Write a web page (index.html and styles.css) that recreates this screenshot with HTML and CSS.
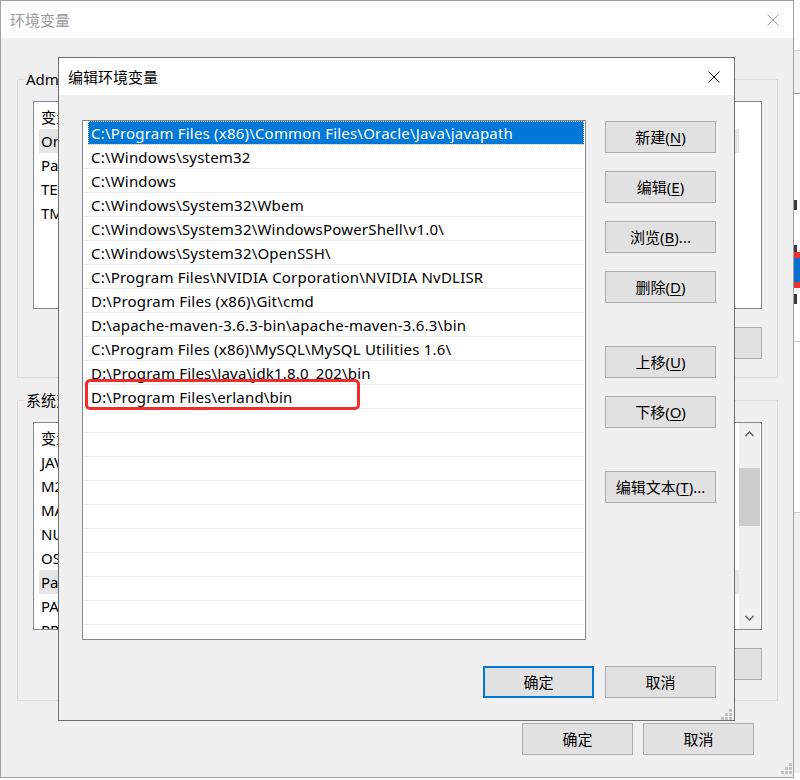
FILE: index.html
```html
<!DOCTYPE html>
<html lang="zh">
<head>
    <meta charset="UTF-8">
    <meta name="viewport" content="width=device-width, initial-scale=1.0">
    <title>编辑环境变量</title>
    <link rel="stylesheet" href="styles.css">
</head>
<body>
    <div class="window outer"> <!-- 后面的“环境变量”窗口 -->
        <div class="titlebar">
            <span class="title">环境变量</span>
            <svg class="close" width="12" height="12" viewBox="0 0 12 12"><path d="M0.5 0.5L11.5 11.5M11.5 0.5L0.5 11.5"/></svg>
        </div>
        <div class="content">
            <fieldset class="group">
                <legend>Administrator 的用户变量(U)</legend>
                <div class="listview">
                    <div class="lv-body">
                        <div class="lv-row"><span class="name">变量</span><span>值</span></div>
                        <div class="lv-row hl"><span class="name">OneDrive</span><span>C:\Users\Administrator\OneDrive</span></div>
                        <div class="lv-row"><span class="name">Path</span><span>C:\Users\Administrator\AppData\Local\Microsoft\WindowsApps;</span></div>
                        <div class="lv-row"><span class="name">TEMP</span><span>C:\Users\Administrator\AppData\Local\Temp</span></div>
                        <div class="lv-row"><span class="name">TMP</span><span>C:\Users\Administrator\AppData\Local\Temp</span></div>
                    </div>
                </div>
                <div class="btn-row">
                    <button class="btn">新建(<u>N</u>)...</button>
                    <button class="btn">编辑(<u>E</u>)...</button>
                    <button class="btn">删除(<u>D</u>)</button>
                </div>
            </fieldset>
            <fieldset class="group sys">
                <legend>系统变量(S)</legend>
                <div class="listview scroll">
                    <div class="lv-body">
                        <div class="lv-row"><span class="name">变量</span><span>值</span></div>
                        <div class="lv-row"><span class="name">JAVA_HOME</span><span>D:\Program Files\Java\jdk1.8.0_202</span></div>
                        <div class="lv-row"><span class="name">M2_HOME</span><span>D:\apache-maven-3.6.3-bin\apache-maven-3.6.3</span></div>
                        <div class="lv-row"><span class="name">MAVEN_HOME</span><span>D:\apache-maven-3.6.3-bin\apache-maven-3.6.3</span></div>
                        <div class="lv-row"><span class="name">NUMBER_OF_PROCESSORS</span><span>8</span></div>
                        <div class="lv-row"><span class="name">OS</span><span>Windows_NT</span></div>
                        <div class="lv-row hl"><span class="name">Path</span><span>C:\Program Files (x86)\Common Files\Oracle\Java\javapath;</span></div>
                        <div class="lv-row"><span class="name">PATHEXT</span><span>.COM;.EXE;.BAT;.CMD;.VBS;.VBE;.JS;.JSE;.WSF;.WSH;.MSC</span></div>
                        <div class="lv-row"><span class="name">PROCESSOR_ARCHITECTURE</span><span>AMD64</span></div>
                    </div>
                    <div class="scrollbar">
                        <div class="sb-btn"><svg width="9" height="6" viewBox="0 0 9 6"><path d="M0.5 5L4.5 1L8.5 5"/></svg></div>
                        <div class="sb-track"><div class="sb-thumb"></div></div>
                        <div class="sb-btn"><svg width="9" height="6" viewBox="0 0 9 6"><path d="M0.5 1L4.5 5L8.5 1"/></svg></div>
                    </div>
                </div>
                <div class="btn-row">
                    <button class="btn">新建(<u>W</u>)...</button>
                    <button class="btn">编辑(<u>I</u>)...</button>
                    <button class="btn">删除(<u>L</u>)</button>
                </div>
            </fieldset>
            <div class="foot">
                <button class="btn">确定</button>
                <button class="btn">取消</button>
            </div>
        </div>
        <svg class="grip" width="11" height="11" viewBox="0 0 11 11"><rect x="8" y="0" width="3" height="3"/><rect x="4" y="4" width="3" height="3"/><rect x="8" y="4" width="3" height="3"/><rect x="0" y="8" width="3" height="3"/><rect x="4" y="8" width="3" height="3"/><rect x="8" y="8" width="3" height="3"/></svg>
    </div>

    <div class="behind"> <!-- 再后面露出的一条页面 -->
        <div class="bh-white" style="height: 50px"></div>
        <div class="bh-line"></div>
        <div class="bh-gray" style="height: 42px"></div>
        <div class="bh-line dark"></div>
        <div class="bh-white" style="height: 106px"></div>
        <div class="bh-ink" style="height: 10px"></div>
        <div class="bh-white" style="height: 35px"></div>
        <div class="bh-ink" style="height: 7px"></div>
        <div class="bh-red" style="height: 6px"></div>
        <div class="bh-blue" style="height: 24px"></div>
        <div class="bh-red" style="height: 6px"></div>
        <div class="bh-white" style="height: 6px"></div>
        <div class="bh-ink" style="height: 10px"></div>
        <div class="bh-white" style="height: 37px"></div>
        <div class="bh-line"></div>
        <div class="bh-white" style="height: 170px"></div>
        <div class="bh-line"></div>
        <div class="bh-gray" style="height: 260px"></div>
    </div>

    <div class="window dialog"> <!-- 前面的“编辑环境变量”对话框 -->
        <div class="titlebar">
            <span class="title">编辑环境变量</span>
            <svg class="close" width="12" height="12" viewBox="0 0 12 12"><path d="M0.5 0.5L11.5 11.5M11.5 0.5L0.5 11.5"/></svg>
        </div>
        <div class="dlg-body">
            <div class="pathlist">
                <div class="path-row sel">C:\Program Files (x86)\Common Files\Oracle\Java\javapath</div>
                <div class="path-row">C:\Windows\system32</div>
                <div class="path-row">C:\Windows</div>
                <div class="path-row">C:\Windows\System32\Wbem</div>
                <div class="path-row">C:\Windows\System32\WindowsPowerShell\v1.0\</div>
                <div class="path-row">C:\Windows\System32\OpenSSH\</div>
                <div class="path-row">C:\Program Files\NVIDIA Corporation\NVIDIA NvDLISR</div>
                <div class="path-row">D:\Program Files (x86)\Git\cmd</div>
                <div class="path-row">D:\apache-maven-3.6.3-bin\apache-maven-3.6.3\bin</div>
                <div class="path-row">C:\Program Files (x86)\MySQL\MySQL Utilities 1.6\</div>
                <div class="path-row">D:\Program Files\Java\jdk1.8.0_202\bin</div>
                <div class="path-row">D:\Program Files\erland\bin</div>
                <div class="path-row"></div>
                <div class="path-row"></div>
                <div class="path-row"></div>
                <div class="path-row"></div>
                <div class="path-row"></div>
                <div class="path-row"></div>
                <div class="path-row"></div>
                <div class="path-row"></div>
                <div class="path-row"></div>
                <div class="path-row"></div>
            </div>
            <div class="side">
                <button class="btn">新建(<u>N</u>)</button>
                <button class="btn">编辑(<u>E</u>)</button>
                <button class="btn">浏览(<u>B</u>)...</button>
                <button class="btn">删除(<u>D</u>)</button>
                <button class="btn far">上移(<u>U</u>)</button>
                <button class="btn">下移(<u>O</u>)</button>
                <button class="btn far">编辑文本(<u>T</u>)...</button>
            </div>
            <div class="dlg-foot">
                <button class="btn default">确定</button>
                <button class="btn">取消</button>
            </div>
        </div>
        <svg class="grip" width="11" height="11" viewBox="0 0 11 11"><rect x="8" y="0" width="3" height="3"/><rect x="4" y="4" width="3" height="3"/><rect x="8" y="4" width="3" height="3"/><rect x="0" y="8" width="3" height="3"/><rect x="4" y="8" width="3" height="3"/><rect x="8" y="8" width="3" height="3"/></svg>
    </div>

    <div class="mark"></div> <!-- 红框标注 -->
</body>
</html>
```

FILE: styles.css
```css
body {
    margin: 0;
    position: relative; /* 给对话框和红框定位 */
    display: flex;
    width: 800px;
    height: 780px;
    overflow: hidden;
    background: #fff;
    font-family: "Noto Sans", "Noto Sans CJK SC", sans-serif;
    font-size: 15px;
    color: #000;
}
.window {
    box-sizing: border-box;
    background: #f0f0f0;
    display: flex;
    flex-direction: column;
}
.titlebar {
    flex: none;
    height: 37px;
    background: #fff;
    display: flex;
    align-items: center;
    justify-content: space-between;
    padding: 0 14px 0 9px;
}
.close path {
    stroke: #000;
    stroke-width: 1;
    fill: none;
}
.grip {
    position: absolute; /* 右下角的拖动点 */
    fill: #c2c2c2;
}

/* 后面的窗口 */
.outer {
    flex: none;
    position: relative;
    width: 794px;
    height: 778px;
    border: 1px solid #a0a0a0;
}
.outer .titlebar {
    color: #9a9a9a; /* 非活动窗口标题 */
}
.outer .close path {
    stroke: #9a9a9a;
}
.outer .grip {
    right: 1px;
    bottom: 3px;
}
.content {
    flex: 1;
    padding: 31px 15px 0 16px;
}
.group {
    margin: 0;
    min-width: 0;
    border: 1px solid #dcdcdc;
    padding: 0 15px 18px;
}
.group + .group {
    margin-top: 12px;
}
.group.sys {
    padding-bottom: 20px;
}
.group legend {
    margin-left: -8px;
    padding: 0 1px;
    line-height: 20px;
}
.listview {
    box-sizing: border-box;
    height: 208px;
    margin-top: 12px;
    border: 1px solid #828790;
    background: #fff;
    display: flex;
}
.lv-body {
    flex: 1;
    min-width: 0;
    padding: 3px 22px 0 5px;
    overflow: hidden;
}
.listview.scroll .lv-body {
    padding-right: 0;
}
.lv-row {
    display: flex;
    height: 24px;
    line-height: 24px;
    padding-left: 2px;
    white-space: nowrap;
}
.lv-row.hl {
    background: #e5e5e5;
}
.lv-row .name {
    flex: none;
    width: 200px;
}
.scrollbar {
    flex: none;
    width: 21px;
    margin-right: 1px;
    background: #f0f0f0;
    display: flex;
    flex-direction: column;
}
.sb-btn {
    height: 22px;
    display: flex;
    align-items: center;
    justify-content: center;
}
.sb-btn path {
    stroke: #606060;
    stroke-width: 1.5;
    fill: none;
}
.sb-track {
    flex: 1;
}
.sb-thumb {
    margin-top: 23px;
    height: 58px;
    background: #cdcdcd;
}
.btn-row {
    display: flex;
    justify-content: flex-end;
    gap: 10px;
    margin-top: 18px;
}
.foot {
    display: flex;
    justify-content: flex-end;
    gap: 10px;
    margin: 22px 24px 0 0;
}
.btn {
    box-sizing: border-box;
    width: 111px;
    height: 32px;
    padding: 0;
    border: 1px solid #adadad;
    background: #e1e1e1;
    font: inherit;
    line-height: 30px;
    color: #000;
}
.btn.default {
    border: 2px solid #0078d7; /* 默认按钮 */
    line-height: 28px;
}
.btn u {
    text-underline-offset: 2px;
}

/* 后面露出的页面 */
.behind {
    flex: 1;
    display: flex;
    flex-direction: column;
}
.bh-white { background: #fff; }
.bh-gray { background: #f0f0f0; }
.bh-line { height: 1px; background: #d0d0d0; }
.bh-line.dark { background: #a0a0a0; }
.bh-ink { background: #3a3a3a; width: 3px; }
.bh-red { background: #e8322f; }
.bh-blue { background: #0a6fd0; }

/* 编辑环境变量对话框 */
.dialog {
    position: absolute;
    left: 58px;
    top: 57px;
    width: 677px;
    height: 664px;
    border: 1px solid #707070;
}
.dialog .grip {
    right: 2px;
    bottom: 0;
}
.dlg-body {
    flex: 1;
    display: grid;
    grid-template-columns: 504px 111px;
    grid-template-rows: 520px 32px;
    column-gap: 19px;
    row-gap: 26px;
    padding: 25px 18px 22px 23px;
}
.pathlist {
    box-sizing: border-box;
    border: 1px solid #828790;
    background: #fff;
    padding: 0 1px;
    overflow: hidden;
}
.path-row {
    box-sizing: border-box;
    height: 24px;
    padding: 2px 0 0 7px;
    line-height: 21px;
    letter-spacing: 0.2px; /* 对齐原图的字宽 */
    border-bottom: 1px solid #ececec;
    white-space: nowrap;
}
.path-row.sel {
    margin-left: 4px;
    padding-left: 3px;
    background: #0078d7;
    color: #fff;
    outline: 1px dotted #f3c27e; /* 焦点虚线框 */
    outline-offset: -1px;
}
.side {
    display: flex;
    flex-direction: column;
    gap: 18px;
    padding-top: 1px;
}
.side .far {
    margin-top: 25px;
}
.dlg-foot {
    grid-column: 1 / -1;
    display: flex;
    justify-content: flex-end;
    gap: 11px;
}
.mark {
    position: absolute;
    left: 85px;
    top: 379px;
    width: 275px;
    height: 31px;
    box-sizing: border-box;
    border: 3px solid #f52a2a;
    border-radius: 5px;
}
```
